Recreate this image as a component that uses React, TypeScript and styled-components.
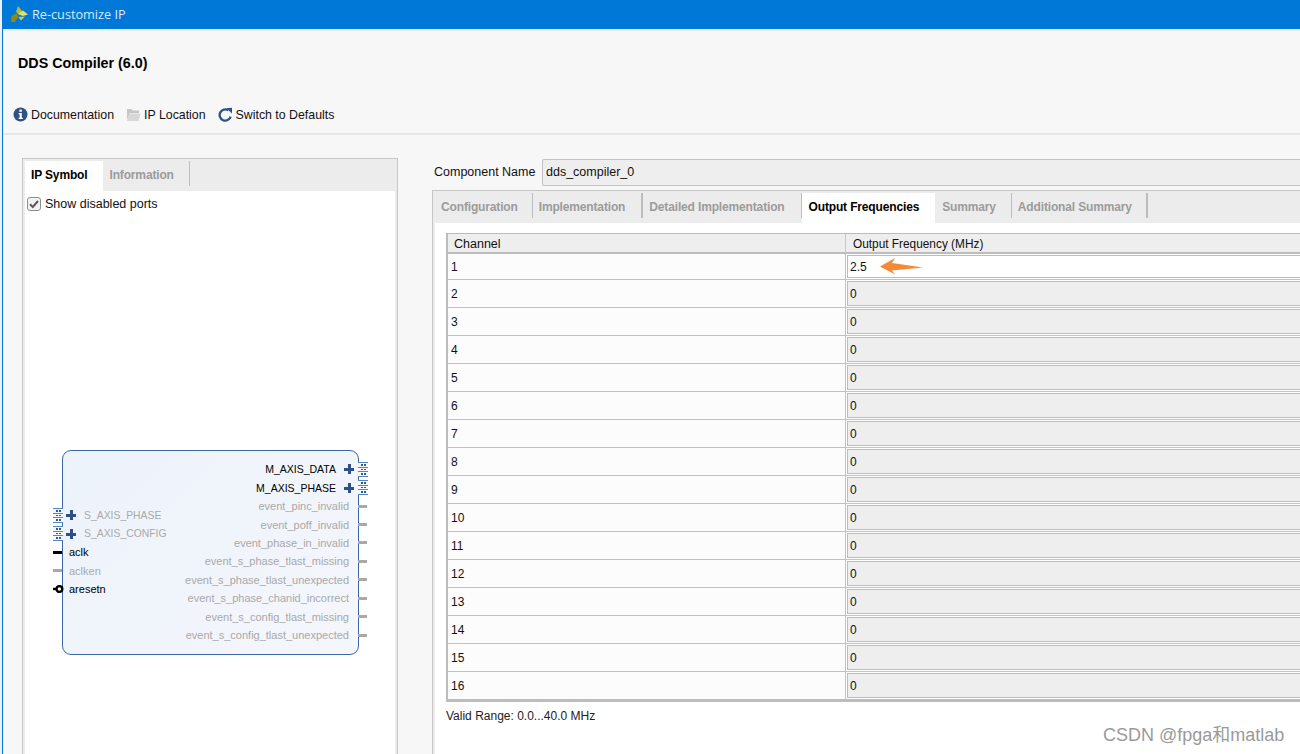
import React from "react";
import styled, { createGlobalStyle } from "styled-components";

const Global = createGlobalStyle`
  html, body { margin: 0; padding: 0; width: 1300px; height: 754px; overflow: hidden; background: #fff; }
  * { box-sizing: border-box; }
  body { font-family: "Liberation Sans", Arial, sans-serif; font-size: 12px; color: #111; }
`;

const Screen = styled.div`
  position: relative;
  display: flex;
  width: 1300px;
  height: 754px;
  overflow: hidden;
`;
const DesktopEdge = styled.div`
  flex: 0 0 2px;
  background: #eef1f4;
`;
const Win = styled.div`
  flex: 1;
  min-width: 0;
  display: flex;
  flex-direction: column;
  border-left: 1px solid #0078d7;
  background: #f7f7f7;
`;
const TitleBar = styled.div`
  flex: 0 0 29px;
  display: flex;
  align-items: center;
  gap: 4px;
  padding: 0 0 1px 7px;
  background: #0078d7;
  color: #d9e9f8;
  font-family: "Open Sans", sans-serif;
  font-size: 12.7px;
`;
const TitleGap = styled.div`
  flex: 0 0 2px;
  background: #ececec;
`;
const Heading = styled.h1`
  flex: 0 0 64px;
  margin: 0;
  padding-left: 15px;
  display: flex;
  align-items: center;
  font-size: 14.3px;
  font-weight: 700;
  color: #000;
`;
const Toolbar = styled.div`
  flex: 0 0 40px;
  display: flex;
  align-items: flex-start;
  padding: 11px 0 0 10px;
  gap: 12px;
  border-bottom: 2px solid #e6e6e6;
`;
const ToolItem = styled.div`
  display: flex;
  align-items: center;
  height: 17px;
  gap: 3px;
  font-size: 12.35px;
  color: #111;
`;
const Main = styled.div`
  flex: 1;
  min-height: 0;
  display: flex;
  padding: 23px 0 0 19px;
`;
const LeftPanel = styled.section`
  flex: 0 0 376px;
  display: flex;
  flex-direction: column;
  border: 1px solid #c6c6c6;
  border-bottom: 0;
  padding: 2px 2px 0;
  background: #ececec;
`;
const TabStrip = styled.div`
  flex: 0 0 30px;
  display: flex;
  align-items: flex-start;
  background: #ececec;
`;
const Tab = styled.div<{ $active?: boolean; $pr?: number; $pl?: number }>`
  height: 30px;
  padding: 7px ${(p) => p.$pr ?? 15}px 0 ${(p) => p.$pl ?? 6}px;
  font-size: 12px;
  letter-spacing: -0.15px;
  font-weight: 700;
  white-space: nowrap;
  background: ${(p) => (p.$active ? "#fff" : "transparent")};
  color: ${(p) => (p.$active ? "#000" : "#9b9b9b")};
`;
const TabDivider = styled.div<{ $w?: number }>`
  flex: 0 0 ${(p) => p.$w ?? 1}px;
  height: 25px;
  background: #bdbdbd;
`;
const LeftBody = styled.div`
  flex: 1;
  display: flex;
  flex-direction: column;
  background: #fff;
`;
const CheckRow = styled.label`
  display: flex;
  align-items: center;
  gap: 4px;
  height: 14px;
  margin: 6px 0 0 2px;
  font-size: 12.5px;
  color: #111;
`;
const SymbolBox = styled.div`
  display: flex;
  justify-content: space-between;
  width: 297px;
  height: 205px;
  margin: 239px 0 0 37px;
  border: 1px solid #3e66a6;
  border-radius: 9px;
  background: linear-gradient(135deg, #edf3fb 0%, #f4f6fb 100%);
  font-size: 11px;
`;
const PortsLeft = styled.div`
  display: flex;
  flex-direction: column;
  margin-left: -10px;
  padding-top: 55px;
`;
const PortsRight = styled.div`
  display: flex;
  flex-direction: column;
  margin-right: -10px;
  padding-top: 9px;
`;
const PortRow = styled.div<{ $off?: boolean; $right?: boolean }>`
  display: flex;
  align-items: center;
  justify-content: ${(p) => (p.$right ? "flex-end" : "flex-start")};
  height: 18.45px;
  white-space: nowrap;
  color: ${(p) => (p.$off ? "#a9a9a9" : "#000")};
`;
const LabelL = styled.span<{ $ml: number; $caps?: boolean }>`
  margin-left: ${(p) => p.$ml}px;
  ${(p) => (p.$caps ? "font-size: 10.4px;" : "")}
`;
const LabelR = styled.span<{ $caps?: boolean }>`
  margin-right: ${(p) => (p.$caps ? 8 : 9)}px;
  ${(p) => (p.$caps ? "font-size: 10.5px;" : "")}
`;
const Stub = styled.span<{ $off?: boolean }>`
  flex: 0 0 9px;
  height: 3px;
  background: ${(p) => (p.$off ? "#a9a9a9" : "#000")};
`;
const Glyph = styled.svg`
  flex: none;
  display: block;
`;

const RightCol = styled.div`
  flex: 1;
  min-width: 0;
  margin-left: 34px;
  display: flex;
  flex-direction: column;
`;
const NameRow = styled.div`
  display: flex;
  align-items: center;
  height: 27px;
  margin-top: 1px;
  padding-left: 2px;
  font-size: 12.5px;
`;
const NameLabel = styled.span`
  flex: 0 0 108px;
  color: #111;
  padding-bottom: 1px;
`;
const NameField = styled.div`
  flex: 1;
  height: 27px;
  display: flex;
  align-items: center;
  padding: 0 0 2px 3px;
  background: #eeeeee;
  border: 1px solid #c2c2c2;
  border-right: 0;
  border-radius: 2px 0 0 2px;
`;
const RightPanel = styled.section`
  flex: 1;
  margin-top: 4px;
  display: flex;
  flex-direction: column;
  border-left: 1px solid #c6c6c6;
  border-top: 1px solid #c6c6c6;
  padding: 2px 0 0 2px;
  background: #ececec;
`;
const RightBody = styled.div`
  flex: 1;
  background: #fff;
  padding: 10px 0 0 11px;
`;
const Table = styled.div`
  border: 2px solid #bcbcbc;
  border-top: 1px solid #bcbcbc;
  border-right: 0;
  border-bottom-width: 3px;
  font-size: 12px;
`;
const HeadRow = styled.div`
  display: flex;
  height: 20px;
  background: #eeeeee;
  border-bottom: 2px solid #bcbcbc;
`;
const HeadCell = styled.div<{ $first?: boolean }>`
  flex: ${(p) => (p.$first ? "0 0 398px" : "1")};
  padding: 3px 0 0 ${(p) => (p.$first ? 6 : 7)}px;
  line-height: 15px;
  font-size: ${(p) => (p.$first ? 12.5 : 11.85)}px;
  color: #111;
  ${(p) => (p.$first ? "border-right: 1px solid #c8c8c8;" : "")}
`;
const Row = styled.div<{ $h: number; $last?: boolean }>`
  display: flex;
  height: ${(p) => p.$h}px;
  border-bottom: ${(p) => (p.$last ? "0" : "1px solid #c2c2c2")};
`;
const ChannelCell = styled.div`
  flex: 0 0 398px;
  display: flex;
  align-items: center;
  padding-left: 3px;
  background: #fcfcfc;
  border-right: 1px solid #c2c2c2;
`;
const FreqField = styled.div<{ $active?: boolean }>`
  flex: 1;
  display: flex;
  align-items: center;
  margin: 1px 0 1px 1px;
  padding-left: 2px;
  background: ${(p) => (p.$active ? "#fff" : "#eeeeee")};
  border: 1px solid #bdbdbd;
  border-right: 0;
`;
const ValidRange = styled.div`
  margin-top: 7px;
  font-size: 12px;
  color: #222;
`;
const ArrowMark = styled.svg`
  position: absolute;
  left: 878px;
  top: 256px;
`;
const Watermark = styled.div`
  position: absolute;
  left: 1103px;
  top: 724px;
  font-size: 18px;
  line-height: 22px;
  color: #9a9a9a;
  white-space: nowrap;
  font-family: "Liberation Sans", "Noto Sans CJK SC", sans-serif;
`;
const TipGap = styled.span<{ $w: number }>`
  flex: 0 0 ${(p) => p.$w}px;
`;

const Logo = () => (
  <Glyph width="18" height="18" viewBox="0 0 18 18">
    <path d="M8 1 L13 7 L9.5 10 L6 7 Z" fill="#b8b93a" />
    <path d="M8 9 L13 5.5 L18 9.5 L13 11 Z" fill="#dfe36a" />
    <path d="M1 17 L1.5 11 L6.5 8.5 L8.5 11.5 L5 17 Z" fill="#8c8a14" />
    <path d="M8.5 12 L15 11.5 L11 15.5 Z" fill="#c9cf55" />
  </Glyph>
);
const InfoIcon = () => (
  <Glyph width="15" height="15" viewBox="0 0 15 15">
    <circle cx="7.5" cy="7.5" r="7" fill="#2f5188" />
    <rect x="6.4" y="2.6" width="2.4" height="2.2" fill="#fff" />
    <path d="M5.6 6h3.2v4.8h1V12H5.6v-1.2h1V7.2h-1z" fill="#fff" />
  </Glyph>
);
const FolderIcon = () => (
  <Glyph width="15" height="15" viewBox="0 0 15 15">
    <path d="M1 2h4.5l1 1.5H13v2.5H4L1 13z" fill="#c6c6c6" />
    <path d="M1 14 L3.6 6.5 H14.5 L12.5 14 Z" fill="#d8d8d8" />
  </Glyph>
);
const RefreshIcon = () => (
  <Glyph width="15" height="15" viewBox="0 0 15 15">
    <path d="M12.6 9.6 A5.6 5.6 0 1 1 10.4 3.4" fill="none" stroke="#2f5188" strokeWidth="2.3" />
    <path d="M8.4 1.2 L14 0.8 L14 6.6 Z" fill="#2f5188" />
  </Glyph>
);
const CheckIcon = () => (
  <Glyph width="14" height="14" viewBox="0 0 14 14">
    <rect x="0.5" y="0.5" width="13" height="13" rx="2.5" fill="#f2f2f2" stroke="#8e8e8e" />
    <path d="M3 7.2 L5.8 10 L11 4" fill="none" stroke="#5a5a5a" strokeWidth="2" />
  </Glyph>
);
const BusIcon = () => (
  <Glyph width="10" height="15" viewBox="0 0 10 15" shapeRendering="crispEdges">
    <rect x="0" y="0" width="10" height="15" fill="#f4f8fd" />
    <path d="M0 0.5H10M0 5.5H10M0 9.5H10M0 14.5H10" stroke="#5585c0" />
    <path d="M3 2h2v2H3zM6 2h2v2H6zM3 7h2v1H3zM6 7h2v1H6zM3 11h2v2H3zM6 11h2v2H6z" fill="#2f5a96" />
  </Glyph>
);
const PlusIcon = () => (
  <Glyph width="10" height="10" viewBox="0 0 10 10" shapeRendering="crispEdges">
    <path d="M4 0h3v4h3v3H7v3H4V7H0V4h4z" fill="#2f4f88" />
  </Glyph>
);
const ResetIcon = () => (
  <Glyph width="11" height="10" viewBox="0 0 11 10">
    <rect x="0" y="3.8" width="4" height="2.4" fill="#000" />
    <circle cx="6.4" cy="5" r="2.9" fill="#fff" stroke="#000" strokeWidth="2.4" />
  </Glyph>
);

const leftPorts = [
  { name: "S_AXIS_PHASE", kind: "bus", off: true },
  { name: "S_AXIS_CONFIG", kind: "bus", off: true },
  { name: "aclk", kind: "wire", off: false },
  { name: "aclken", kind: "wire", off: true },
  { name: "aresetn", kind: "reset", off: false },
];
const rightBus = ["M_AXIS_DATA", "M_AXIS_PHASE"];
const rightEvents = [
  "event_pinc_invalid",
  "event_poff_invalid",
  "event_phase_in_invalid",
  "event_s_phase_tlast_missing",
  "event_s_phase_tlast_unexpected",
  "event_s_phase_chanid_incorrect",
  "event_s_config_tlast_missing",
  "event_s_config_tlast_unexpected",
];
const channels = Array.from({ length: 16 }, (_, i) => i + 1);

export default function App() {
  return (
    <Screen>
      <Global />
      <DesktopEdge />
      <Win>
        <TitleBar>
          <Logo />
          <span>Re-customize IP</span>
        </TitleBar>
        <TitleGap />
        <Heading>DDS Compiler (6.0)</Heading>
        <Toolbar>
          <ToolItem>
            <InfoIcon />
            Documentation
          </ToolItem>
          <ToolItem>
            <FolderIcon />
            IP Location
          </ToolItem>
          <ToolItem>
            <RefreshIcon />
            Switch to Defaults
          </ToolItem>
        </Toolbar>
        <Main>
          <LeftPanel>
            <TabStrip>
              <Tab $active $pr={16}>IP Symbol</Tab>
              <Tab>Information</Tab>
              <TabDivider />
            </TabStrip>
            <LeftBody>
              <CheckRow>
                <CheckIcon />
                Show disabled ports
              </CheckRow>
              <SymbolBox>
                <PortsLeft>
                  {leftPorts.map((p) => (
                    <PortRow key={p.name} $off={p.off}>
                      {p.kind === "bus" && (
                        <>
                          <BusIcon />
                          <TipGap $w={3} />
                          <PlusIcon />
                          <LabelL $ml={8} $caps>{p.name}</LabelL>
                        </>
                      )}
                      {p.kind === "wire" && (
                        <>
                          <Stub $off={p.off} />
                          <LabelL $ml={7}>{p.name}</LabelL>
                        </>
                      )}
                      {p.kind === "reset" && (
                        <>
                          <ResetIcon />
                          <LabelL $ml={5}>{p.name}</LabelL>
                        </>
                      )}
                    </PortRow>
                  ))}
                </PortsLeft>
                <PortsRight>
                  {rightBus.map((n) => (
                    <PortRow key={n} $right>
                      <LabelR $caps>{n}</LabelR>
                      <PlusIcon />
                      <TipGap $w={4} />
                      <BusIcon />
                    </PortRow>
                  ))}
                  {rightEvents.map((n) => (
                    <PortRow key={n} $right $off>
                      <LabelR>{n}</LabelR>
                      <Stub $off />
                      <TipGap $w={1} />
                    </PortRow>
                  ))}
                </PortsRight>
              </SymbolBox>
            </LeftBody>
          </LeftPanel>
          <RightCol>
            <NameRow>
              <NameLabel>Component Name</NameLabel>
              <NameField>dds_compiler_0</NameField>
            </NameRow>
            <RightPanel>
              <TabStrip>
                <Tab $pr={14}>Configuration</Tab>
                <TabDivider />
                <Tab $pr={16}>Implementation</Tab>
                <TabDivider $w={2} />
                <Tab $pr={16}>Detailed Implementation</Tab>
                <TabDivider $w={1} />
                <Tab $active $pl={7} $pr={16}>Output Frequencies</Tab>
                <Tab $pl={7}>Summary</Tab>
                <TabDivider />
                <Tab $pr={14}>Additional Summary</Tab>
                <TabDivider $w={2} />
              </TabStrip>
              <RightBody>
                <Table>
                  <HeadRow>
                    <HeadCell $first>Channel</HeadCell>
                    <HeadCell>Output Frequency (MHz)</HeadCell>
                  </HeadRow>
                  {channels.map((c) => (
                    <Row key={c} $h={c === 1 ? 26 : c === 16 ? 27 : 28} $last={c === 16}>
                      <ChannelCell>{c}</ChannelCell>
                      <FreqField $active={c === 1}>{c === 1 ? "2.5" : "0"}</FreqField>
                    </Row>
                  ))}
                </Table>
                <ValidRange>Valid Range: 0.0...40.0 MHz</ValidRange>
              </RightBody>
            </RightPanel>
          </RightCol>
        </Main>
      </Win>
      <ArrowMark width="46" height="20" viewBox="0 0 46 20">
        <path d="M2 10.5 L17 2 L14 7 L45 11.5 L14 14.5 L17 18.5 Z" fill="#f58a36" />
      </ArrowMark>
      <Watermark>CSDN @fpga和matlab</Watermark>
    </Screen>
  );
}
